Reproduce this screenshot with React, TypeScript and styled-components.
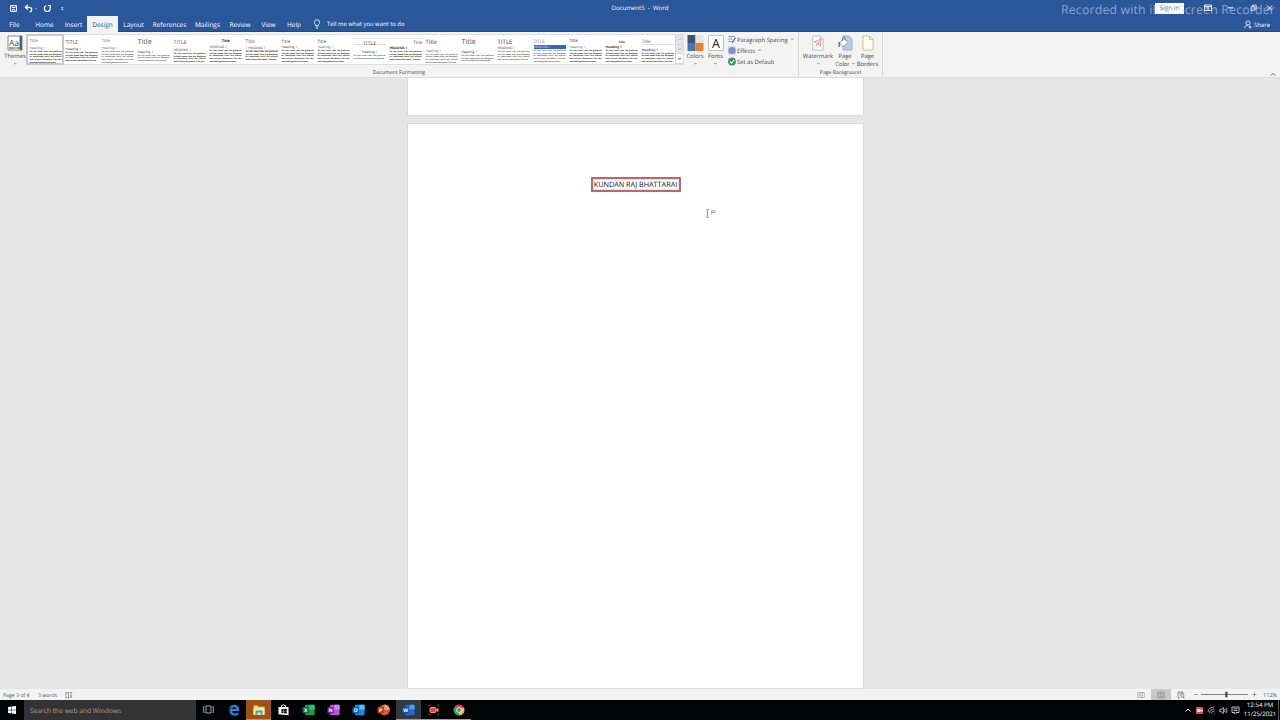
import React from "react";
import styled, { createGlobalStyle } from "styled-components";

const Global = createGlobalStyle`
  * { box-sizing: border-box; }
  body { margin: 0; overflow: hidden; font-family: "Open Sans", "Noto Sans", sans-serif; text-rendering: geometricPrecision; }
  svg { display: block; flex: none; }
`;

const Window = styled.div`
  width: 1280px; height: 720px; display: flex; flex-direction: column;
  position: relative; overflow: hidden; background: #e6e6e6; color: #444;
`;

const TitleBar = styled.header`
  height: 16px; flex: none; background: #2a579a; color: #fff; display: grid;
  grid-template-columns: 480px 320px 1fr; align-items: center;
`;
const QuickAccess = styled.div`display: flex; align-items: center; gap: 6px; padding-left: 9px;`;
const DocName = styled.div`text-align: center; font-size: 6.1px; line-height: 16px; white-space: pre;`;
const WindowButtons = styled.div`
  display: flex; justify-content: flex-end; align-items: center; padding-right: 6px; height: 16px;
`;
const SignIn = styled.div`
  width: 29px; height: 11px; background: #fff; color: #526f9f; font-size: 6.4px; line-height: 10px;
  text-align: center; margin-right: 12px;
`;
const WinIcon = styled.div`width: 23px; display: flex; justify-content: center; &:last-child { width: 9px; }`;
const Recording = styled.div`
  position: absolute; right: 5px; top: 1px; font: 12.3px/17px "Open Sans", sans-serif;
  color: rgba(205, 216, 235, .62); white-space: pre; letter-spacing: .18px;
`;

const TabBar = styled.nav`
  height: 16px; flex: none; background: #2a579a; color: #fff; display: flex; border-bottom: 1px solid #1d4a8b;
`;
const Tab = styled.div<{ $w: number; $active?: boolean }>`
  width: ${p => p.$w}px; text-align: center; font-size: 6.5px; line-height: 17px; height: 16px;
  background: ${p => (p.$active ? "#f3f3f3" : "transparent")}; color: ${p => (p.$active ? "#2a579a" : "#fff")};
`;
const TellMe = styled.div`display: flex; align-items: center; gap: 5px; padding: 1px 0 0 6px; flex: 1; font-size: 5.9px;`;
const Share = styled.div`display: flex; align-items: center; gap: 2px; padding: 2px 10px 0 0; font-size: 6px;`;

const Ribbon = styled.section`
  height: 46px; flex: none; background: #f3f3f3; border-bottom: 1px solid #dcdcdc; display: flex;
`;
const Group = styled.div<{ $w: number }>`
  width: ${p => p.$w}px; height: 45px; flex: none; display: flex; flex-direction: column;
  & + & { border-left: 1px solid #d8d8d8; }
`;
const GroupBody = styled.div`height: 38px; display: flex;`;
const GroupName = styled.div`font-size: 5.1px; line-height: 8px; text-align: center; color: #444;`;
const BigButton = styled.div<{ $w: number; $indent?: number }>`
  width: ${p => p.$w}px; flex: none; display: flex; flex-direction: column; align-items: center;
  padding: 3px 0 0 ${p => p.$indent ?? 0}px;
  font-size: 5.8px; line-height: 7.5px; white-space: nowrap; text-align: center;
  svg { margin-bottom: 2px; }
`;
const Caret = styled.i`
  display: block; width: 3px; height: 2px; margin-top: 2px; background: #999;
  clip-path: polygon(0 0, 50% 50%, 100% 0, 100% 50%, 50% 100%, 0 50%);
`;
const InlineCaret = styled(Caret)`display: inline-block; margin: 0 0 1px 2px;`;

const Gallery = styled.div`
  margin-top: 2px; width: 657px; flex: none; height: 31px; display: flex; background: #fff; border: 1px solid #dedede; border-left: 0;
`;
const StyleCell = styled.div<{ $selected?: boolean }>`
  width: 36px; height: 29px; flex: none; padding: 2.5px 1px 0 2.5px;
  outline: ${p => (p.$selected ? "2px solid #c8c8c8" : "0")}; outline-offset: -1px;
`;
const StyleTitle = styled.div<{ $size: number; $align: string; $color: string; $bold?: boolean; $rule?: boolean; $lines?: boolean }>`
  height: ${p => (p.$rule ? 7.5 : 8)}px; font-size: ${p => p.$size}px; line-height: 8px; text-align: ${p => p.$align};
  color: ${p => p.$color}; font-weight: ${p => (p.$bold ? 700 : 400)};
  border-bottom: ${p => (p.$rule ? "1px solid #ddd" : "0")};
  border-top: ${p => (p.$lines ? "1px solid #e2e2e2" : "0")};
`;
const StyleHeading = styled.div<{ $color: string; $align: string; $bar?: boolean; $gap: number; $bold?: boolean; $rule?: boolean }>`
  font-size: 3.3px; line-height: 4px; height: 4px; margin-top: ${p => p.$gap}px; text-align: ${p => p.$align};
  color: ${p => (p.$bar ? "#dce7f8" : p.$color)}; background: ${p => (p.$bar ? "#3465b8" : "transparent")};
  font-weight: ${p => (p.$bold ? 700 : 400)}; box-shadow: ${p => (p.$rule ? "0 1px #ccc" : "none")};
`;
const StyleText = styled.p<{ $dark: boolean }>`
  margin: 1px 0 0; font-size: 1.95px; line-height: 2.7px; font-weight: 700; white-space: nowrap;
  color: ${p => (p.$dark ? "#111" : "#555")};
  span { display: block; width: 32px; text-align: justify; text-align-last: justify; }
  span:last-child { text-align-last: left; }
`;
const GalleryScroll = styled.div`
  width: 8px; margin-left: auto; display: flex; flex-direction: column; background: #e4e4e4; border-left: 1px solid #d4d4d4;
`;
const ScrollStep = styled.div<{ $on?: boolean }>`
  flex: 1; display: flex; justify-content: center; align-items: center; border-bottom: 1px solid #d6d6d6;
  background: ${p => (p.$on ? "#fff" : "#e4e4e4")}; opacity: ${p => (p.$on ? 1 : 0.6)};
  ${Caret} { margin: 0; background: ${p => (p.$on ? "#555" : "#999")}; }
`;
const SmallList = styled.div`width: 73px; padding: 2px 0 0 3px; display: flex; flex-direction: column;`;
const SmallButton = styled.div`height: 11px; display: flex; align-items: center; gap: 1px; font-size: 5.8px; white-space: nowrap;`;
const RibbonEnd = styled.div`
  flex: 1; border-left: 1px solid #d8d8d8; display: flex; justify-content: flex-end; align-items: flex-end; padding: 0 4px 0 0;
`;

const Canvas = styled.main`
  height: 611px; flex: none; display: flex; flex-direction: column; align-items: center; padding-right: 9px; gap: 7px; overflow: hidden;
`;
const Page = styled.article<{ $h: number; $first?: boolean }>`
  width: 457px; height: ${p => p.$h}px; flex: none; background: #fff; border: 1px solid #dadada;
  border-top-width: ${p => (p.$first ? 0 : 1)}px; display: flex; flex-direction: column; align-items: center;
`;
const NameBox = styled.div`
  margin-top: 53px; width: 90px; height: 15px; border: 2px solid #b9696b; outline: 1px solid #f3e0e0; outline-offset: -3px;
  color: #161616; font: 7.25px/12px "Open Sans", sans-serif; display: flex; justify-content: center; white-space: nowrap;
`;
const Pointer = styled.div`position: absolute; left: 705px; top: 208px;`;

const StatusBar = styled.footer`
  height: 11px; flex: none; background: #f3f3f3; display: flex; align-items: center; color: #555; font-size: 5.2px; padding-left: 3px;
`;
const StatusText = styled.span<{ $w: number }>`width: ${p => p.$w}px; white-space: nowrap; line-height: 12px;`;
const StatusRight = styled.div`margin-left: auto; display: flex; align-items: center; height: 11px; padding-right: 3px;`;
const Zoom = styled.span`width: 14px; text-align: right; font-size: 5.6px; line-height: 12px;`;
const ViewMode = styled.div<{ $on?: boolean }>`
  width: 20px; height: 11px; display: flex; align-items: center; justify-content: center; background: ${p => (p.$on ? "#c8c8c8" : "transparent")};
`;

const TaskBar = styled.div`height: 20px; flex: none; background: #020305; display: flex; color: #fff;`;
const Start = styled.div`width: 24px; display: flex; align-items: center; justify-content: center;`;
const Search = styled.div`width: 172px; background: #333; color: #a5a5a5; font-size: 6.65px; padding: 1px 0 0 6px; line-height: 20px;`;
const TaskItem = styled.div<{ $bg?: string; $line?: string }>`
  width: 25px; display: flex; align-items: center; justify-content: center; background: ${p => p.$bg ?? "transparent"};
  border-bottom: 1px solid ${p => p.$line ?? "transparent"};
`;
const Tray = styled.div`margin-left: auto; display: flex; align-items: center; gap: 3px;`;
const Clock = styled.div`
  width: 34px; height: 20px; padding-top: 1px; text-align: center; font-size: 6.1px; line-height: 8.5px; white-space: nowrap;
`;
const ShowDesktop = styled.div`width: 2px; height: 20px; margin-left: -2px; border-left: 1px solid #555;`;

type Look = {
  title: string; size: number; color?: string; align?: string; bold?: boolean; rule?: boolean; lines?: boolean;
  heading?: string; hColor?: string; hAlign?: string; hBold?: boolean; hRule?: boolean; bar?: boolean; gap?: number; dark?: boolean;
  rows?: number;
};
const looks: Look[] = [
  { title: "Title", size: 4.2, hColor: "#44689c", dark: true },
  { title: "TITLE", size: 5.2, gap: 1.5, dark: true, rows: 4 },
  { title: "Title", size: 4.2, color: "#5b7096", hColor: "#5b7096" },
  { title: "Title", size: 7.2, gap: 4, rows: 3 },
  { title: "TITLE", size: 5.4, heading: "HEADING 1", gap: 2.5, dark: true, rows: 4 },
  { title: "Title", size: 3.6, align: "center", bold: true, color: "#111", heading: "HEADING 1", gap: -0.5, dark: true },
  { title: "Title", size: 4.8, heading: "1  HEADING 1", hRule: true, gap: 0.5, dark: true, rows: 4 },
  { title: "Title", size: 4.4, dark: true, gap: -0.5 },
  { title: "Title", size: 4.4, color: "#44546a", hColor: "#44689c", gap: -0.5, dark: true },
  { title: "TITLE", size: 5.4, align: "center", rule: true, lines: true, hAlign: "center", gap: 5, rows: 2 },
  { title: "Title", size: 4.4, align: "right", lines: true, heading: "HEADING 1", hBold: true, gap: 0.5, dark: true, rows: 4 },
  { title: "Title", size: 5.9, color: "#44546a", hColor: "#44689c", gap: 3, rows: 4 },
  { title: "Title", size: 7.2, gap: 4.5, rows: 3 },
  { title: "TITLE", size: 6.1, color: "#333", heading: "HEADING 1", gap: 0.5, rows: 4 },
  { title: "TITLE", size: 4.6, color: "#4472c4", bar: true, gap: -0.5, heading: "HEADING 1" },
  { title: "Title", size: 4.2, color: "#222", hColor: "#44689c", gap: -0.5, dark: true },
  { title: "Title", size: 2.8, align: "center", bold: true, color: "#111", hBold: true, gap: -0.5, dark: true },
  { title: "Title", size: 4.6, rule: true, hColor: "#44689c", hBold: true, gap: 2.5, dark: true, rows: 4 },
];
const sample = [
  "On the Insert tab, the galleries",
  "include items that are designed",
  "to coordinate with the overall",
  "look of your document. You can",
  "use these galleries to insert",
];

const Line = ({ w = 10, h = 10, d, color = "#fff", sw = 1 }: { w?: number; h?: number; d: string; color?: string; sw?: number }) => (
  <svg width={w} height={h} viewBox={`0 0 ${w} ${h}`} fill="none" stroke={color} strokeWidth={sw}><path d={d} /></svg>
);

const OfficeTile = ({ letter, dark, mid, light, round }: { letter: string; dark: string; mid: string; light: string; round?: boolean }) => (
  <svg width="13" height="12" viewBox="0 0 13 12">
    {round ? (
      <><circle cx="7.4" cy="6" r="5.4" fill={mid} /><path d="M7.4 .6A5.4 5.4 0 0 1 12.8 6H7.4Z" fill={light} /></>
    ) : (
      <><rect x="3" y=".8" width="9.6" height="10.4" rx=".8" fill={mid} /><path d="M7.5 .8h4.3q.8 0 .8.8v4H7.5Z" fill={light} /></>
    )}
    <rect x=".5" y="3" width="6.3" height="6.3" rx=".6" fill={dark} />
    <text x="3.65" y="8" fontSize="5" fontWeight="700" textAnchor="middle" fill="#fff" fontFamily="Open Sans, sans-serif">{letter}</text>
  </svg>
);

export default function App() {
  return (
    <Window>
      <Global />
      <TitleBar>
        <QuickAccess>
          <svg width="9" height="9" viewBox="0 0 9 9" fill="none" stroke="#fff" strokeWidth=".9"><path d="M1.5 1.5h6v6h-6ZM3 1.5v2h3.2v-2M3.2 7.4V5.4h2.6v2" /></svg>
          <svg width="13" height="9" viewBox="0 0 13 9" fill="none" stroke="#fff" strokeWidth="1.2"><path d="M3.8 1 1.3 3.3 3.8 5.5M1.5 3.3h3.8c3.2 0 3.2 4.2.2 4.7" /><path d="M11 4.2l1 1 1-1" strokeWidth=".5" /></svg>
          <svg width="9" height="9" viewBox="0 0 9 9" fill="none" stroke="#fff" strokeWidth="1.2"><path d="M3 1.8A3 3 0 1 0 6.9 3M4.8 1.5h2.5V4" /></svg>
          <svg width="6" height="9" viewBox="0 0 6 9"><path d="M3 3.2h2.5v.6H3ZM3 4.8h2.5L4.2 6.2Z" fill="#fff" /></svg>
        </QuickAccess>
        <DocName>Document5  -  Word</DocName>
        <WindowButtons>
          <SignIn>Sign in</SignIn>
          <WinIcon><Line w={8} h={8} d="M.5 1h7v5.5h-7ZM.5 2.6h7M4 6V3.5M3 4.5l1-1 1 1" sw={0.9} /></WinIcon>
          <WinIcon><Line w={7} h={8} d="M1 3.8h5" /></WinIcon>
          <WinIcon><Line w={7} h={8} d="M1.2 2.7h3.6v3.6H1.2ZM2.5 2.5V1.2h3.7V5H5" sw={0.8} /></WinIcon>
          <WinIcon><Line w={7} h={8} d="M1 1.5l5 5M6 1.5l-5 5" /></WinIcon>
        </WindowButtons>
      </TitleBar>
      <TabBar>
        <Tab $w={29}>File</Tab>
        <Tab $w={31}>Home</Tab>
        <Tab $w={27}>Insert</Tab>
        <Tab $w={31} $active>Design</Tab>
        <Tab $w={31}>Layout</Tab>
        <Tab $w={41}>References</Tab>
        <Tab $w={35}>Mailings</Tab>
        <Tab $w={30}>Review</Tab>
        <Tab $w={27}>View</Tab>
        <Tab $w={24}>Help</Tab>
        <TellMe>
          <svg width="10" height="10" viewBox="0 0 10 10" fill="none" stroke="#fff" strokeWidth=".8"><path d="M3.8 6.7C3.8 5.4 2.4 5 2.4 3.3a2.6 2.6 0 0 1 5.2 0c0 1.7-1.4 2.1-1.4 3.4ZM3.8 8h2.4M4.2 9.3h1.6" /></svg>
          <span>Tell me what you want to do</span>
        </TellMe>
        <Share>
          <svg width="8" height="9" viewBox="0 0 8 9" fill="none" stroke="#fff" strokeWidth=".8"><circle cx="4" cy="3" r="2.1" /><path d="M.7 8.3c0-2 1.2-3 3-3M4.5 7h3M6 5.5v3" /></svg>
          <span>Share</span>
        </Share>
      </TabBar>

      <Ribbon>
        <Group $w={798}>
          <GroupBody>
            <BigButton $w={27} $indent={3}>
              <svg width="16" height="16" viewBox="0 0 16 16"><path d="M1 1h14v14H1Z" fill="#fff" stroke="#8a8a8a" /><path d="M12.5 1h2.5v14h-2.5Z" fill="#4b6083" /><text x="2" y="10.5" fontSize="8.5" fill="#384b68" fontFamily="Open Sans, sans-serif">Aa</text><path d="M2.5 12h2v2h-2Z" fill="#4c7ac4" /><path d="M4.5 12h2v2h-2Z" fill="#e78436" /><path d="M6.5 12h2v2h-2Z" fill="#a5a5a5" /><path d="M8.5 12h2v2h-2Z" fill="#edbd38" /><path d="M10.5 12h2v2h-2Z" fill="#5aa655" /></svg>
              Themes<Caret />
            </BigButton>
            <Gallery>
              {looks.map((l, i) => (
                <StyleCell key={i} $selected={i === 0}>
                  <StyleTitle $size={l.size} $align={l.align ?? "left"} $color={l.color ?? "#555"} $bold={l.bold} $rule={l.rule} $lines={l.lines}>{l.title}</StyleTitle>
                  <StyleHeading $color={l.hColor ?? "#333"} $align={l.hAlign ?? "left"} $bar={l.bar} $gap={l.gap ?? 0.5} $bold={l.hBold} $rule={l.hRule}>{l.heading ?? "Heading 1"}</StyleHeading>
                  <StyleText $dark={!!l.dark}>{sample.slice(0, l.rows ?? 5).map(row => <span key={row}>{row}</span>)}</StyleText>
                </StyleCell>
              ))}
              <GalleryScroll><ScrollStep><Caret /></ScrollStep><ScrollStep><Caret /></ScrollStep><ScrollStep $on><Caret /></ScrollStep></GalleryScroll>
            </Gallery>
            <BigButton $w={22}>
              <svg width="17" height="16" viewBox="0 0 17 16"><path d="M.5 0h8v8h-8Z" fill="#42546c" /><path d="M8.5 0h8v8h-8Z" fill="#e4e4e6" /><path d="M.5 8h8v8h-8Z" fill="#4472c4" /><path d="M8.5 8h8v8h-8Z" fill="#ed7d31" /></svg>
              Colors<Caret />
            </BigButton>
            <BigButton $w={19}>
              <svg width="16" height="16" viewBox="0 0 16 16"><path d="M.5.5h15v15H.5Z" fill="#fff" stroke="#c2c2c2" /><text x="8" y="12.5" fontSize="12.5" textAnchor="middle" fill="#222" fontFamily="Open Sans, sans-serif">A</text></svg>
              Fonts<Caret />
            </BigButton>
            <SmallList>
              <SmallButton><svg width="8" height="9" viewBox="0 0 8 9"><path d="M.5 1.5h6M.5 4h4M.5 6.5h3" stroke="#777" strokeWidth=".8" /><path d="M7.5 2.5 4 8" stroke="#4472c4" strokeWidth="1.3" /></svg>Paragraph Spacing<InlineCaret /></SmallButton>
              <SmallButton><svg width="8" height="9" viewBox="0 0 8 9"><path d="M0 .5h8v8H0Z" fill="#cbd5e9" /><circle cx="4" cy="4.5" r="3.6" fill="#7b93cb" /></svg>Effects<InlineCaret /></SmallButton>
              <SmallButton><svg width="8" height="9" viewBox="0 0 8 9"><circle cx="4" cy="4.5" r="3.9" fill="#3f8e6a" /><path d="M2 4.5l1.5 1.6L6.2 3" fill="none" stroke="#fff" strokeWidth="1.1" /></svg>Set as Default</SmallButton>
            </SmallList>
          </GroupBody>
          <GroupName>Document Formatting</GroupName>
        </Group>
        <Group $w={84}>
          <GroupBody>
            <BigButton $w={38}>
              <svg width="12" height="16" viewBox="0 0 12 16"><path d="M.8 1h7.4l3 3v11H.8Z" fill="#fff" stroke="#b6b6b6" strokeWidth=".8" /><path d="M8 1v3h3" fill="none" stroke="#b6b6b6" strokeWidth=".8" /><path d="M2 7l7-3-1 8M3.5 12 9 4M2.5 7l6 3.5" stroke="#e99886" fill="none" /></svg>
              Watermark<Caret />
            </BigButton>
            <BigButton $w={16}>
              <svg width="15" height="16" viewBox="0 0 15 16"><path d="M5 1h6l3 3v11H5Z" fill="#b7cdeb" stroke="#8baad4" strokeWidth=".8" /><path d="M1.5 8 6 3.5l4 4L5.5 12Z" fill="#fff" stroke="#777" strokeWidth=".8" /><path d="M4.5 6V3q1-2 2.5 0v2" fill="none" stroke="#777" strokeWidth=".8" /><path d="M1.2 7v5" stroke="#3d78bd" strokeWidth="1.4" /></svg>
              Page<span>Color<InlineCaret /></span>
            </BigButton>
            <BigButton $w={29}>
              <svg width="12" height="16" viewBox="0 0 12 16"><path d="M1 1h6.5L11 4.5V15H1Z" fill="#fffdf3" stroke="#d9bd78" /><path d="M7.5 1v3.5H11" fill="none" stroke="#aaa" strokeWidth=".7" /></svg>
              Page<span>Borders</span>
            </BigButton>
          </GroupBody>
          <GroupName>Page Background</GroupName>
        </Group>
        <RibbonEnd><Line w={6} h={5} d="M.8 3.6 3 1.4l2.2 2.2" color="#555" sw={0.9} /></RibbonEnd>
      </Ribbon>

      <Canvas>
        <Page $h={38} $first />
        <Page $h={566}><NameBox>KUNDAN RAJ BHATTARAI</NameBox></Page>
      </Canvas>
      <Pointer>
        <svg width="12" height="11" viewBox="0 0 12 11" fill="none" stroke="#888" strokeWidth=".8"><path d="M1 1.5q1.5 0 1.5 1v6q0 1-1.5 1M4 1.5q-1.5 0-1.5 1v6q0 1 1.5 1M6 3h5M6 4.5h4M6 6h1" /></svg>
      </Pointer>

      <StatusBar>
        <StatusText $w={35}>Page 3 of 4</StatusText>
        <StatusText $w={27}>3 words</StatusText>
        <Line w={8} h={8} d="M.8 1.5 3.5 2v5L.8 6.5ZM3.5 2l3-.5v2M3.5 7l1-.3M5 4l2 3M7 4 5 7" color="#777" sw={0.7} />
        <StatusRight>
          <ViewMode><Line w={8} h={8} d="M.8 1.5h6.4v5H.8ZM4 1.5v5M2 3h1M2 4.5h1M5 3h1M5 4.5h1" color="#888" sw={0.6} /></ViewMode>
          <ViewMode $on><Line w={8} h={8} d="M1 1h6v6H1ZM2.5 2.5h3M2.5 4h3M2.5 5.5h3" color="#777" sw={0.6} /></ViewMode>
          <ViewMode><Line w={8} h={8} d="M1 1h5v2M1 1v6h2M2.5 2.5h3M2.5 4h1M4 5a1.5 1.5 0 1 0 3 0a1.5 1.5 0 1 0-3 0M6 6l1.5 1.5" color="#666" sw={0.7} /></ViewMode>
          <svg width="72" height="11" viewBox="0 0 72 11"><path d="M3 5.5h4M61.5 5.5h4M63.5 3.5v4" stroke="#777" strokeWidth=".7" /><path d="M10 5.5h47" stroke="#777" strokeWidth=".9" /><path d="M34.3 2.7h2.2v5.6h-2.2Z" fill="#444" /></svg>
          <Zoom>112%</Zoom>
        </StatusRight>
      </StatusBar>

      <TaskBar>
        <Start><svg width="8" height="8" viewBox="0 0 8 8" fill="#fff"><path d="M0 1.1 3.6.6v3.1H0ZM4 .5 8 0v3.7H4ZM0 4.2h3.6v3.2L0 6.9ZM4 4.2h4V8l-4-.5Z" /></svg></Start>
        <Search>Search the web and Windows</Search>
        <TaskItem><Line w={11} h={9} d="M3 1h5v7H3ZM1.5 1.5H.7v6h.8M9.5 1.5h.8v6h-.8" color="#ccc" sw={0.8} /></TaskItem>
        <TaskItem><svg width="12" height="12" viewBox="0 0 12 12"><path d="M.8 5.4C1.4 2.2 3.7.7 6.2.7c3.2 0 5 2.3 5 5v1.4H4c.2 2.6 3.8 3 6.5 1.5v2.3C6.3 12.6 1.5 11.4 1.5 7c0-1.7 1-3 2.5-3.7C2.6 3.6 1.6 4.3.8 5.4ZM4.1 5.1h4.2C8.3 2.3 4.3 2.3 4.1 5.1Z" fill="#2084df" /></svg></TaskItem>
        <TaskItem $bg="#9c5315" $line="#f08522"><svg width="12" height="12" viewBox="0 0 12 12"><path d="M.5 1.5h4l1 1.2h6v8H.5Z" fill="#f8d978" /><path d="M.5 4.5h11v6.2H.5Z" fill="#ffe99e" /><path d="M2.5 6.5h7v4.2h-2V8.6h-3v2.1h-2Z" fill="#34a9cf" /></svg></TaskItem>
        <TaskItem><svg width="12" height="12" viewBox="0 0 12 12"><path d="M.5 3h10v8.3L.5 10.2Z" fill="#fff" /><path d="M3.5 3.5V1.7Q5.5 0 7.5 1.7v1.8" fill="none" stroke="#fff" /><path d="M3.3 5.2 5.6 5v1.9H3.3ZM6 5l2.8-.3v2.2H6ZM3.3 7.3h2.3v1.9L3.3 9ZM6 7.3h2.8v2.2L6 9.2Z" fill="#111" /></svg></TaskItem>
        <TaskItem><OfficeTile letter="X" dark="#126b3d" mid="#1e9458" light="#36bd77" /></TaskItem>
        <TaskItem><OfficeTile letter="N" dark="#78209f" mid="#b856da" light="#d184ea" /></TaskItem>
        <TaskItem><OfficeTile letter="O" dark="#0863b4" mid="#1989d8" light="#50c5f3" /></TaskItem>
        <TaskItem><OfficeTile letter="P" dark="#bd3b1c" mid="#d95b3b" light="#ff9878" round /></TaskItem>
        <TaskItem $bg="#303840" $line="#6aa9df"><OfficeTile letter="W" dark="#1751a8" mid="#2766c5" light="#45a2ec" /></TaskItem>
        <TaskItem $line="#6aa9df"><svg width="12" height="12" viewBox="0 0 12 12" fill="none"><path d="M1 3V1h2M9 1h2v2M1 9v2h2M9 11h2V9" stroke="#a33030" strokeWidth=".8" /><rect x="2" y="3.5" width="6" height="5" rx="1" fill="#d84848" stroke="#ffb0a8" strokeWidth=".8" /><path d="M8 5.5l2.5-1.5v4L8 6.5Z" fill="#ff8d83" /></svg></TaskItem>
        <TaskItem $line="#6aa9df"><svg width="12" height="12" viewBox="0 0 12 12"><path d="M6 6 1.24 3.25A5.5 5.5 0 0 1 10.76 3.25Z" fill="#e64235" /><path d="M6 6l4.76-2.75A5.5 5.5 0 0 1 6 11.5Z" fill="#fbc116" /><path d="M6 6v5.5A5.5 5.5 0 0 1 1.24 3.25Z" fill="#33a753" /><circle cx="6" cy="6" r="2.7" fill="#fff" /><circle cx="6" cy="6" r="2.1" fill="#4384f3" /></svg></TaskItem>
        <Tray>
          <Line w={8} h={8} d="M1.5 5.5 4 3l2.5 2.5" />
          <svg width="9" height="9" viewBox="0 0 9 9"><path d="M1 1h7v7H1Z" fill="#d84b52" /><rect x="2" y="3" width="3.6" height="3" fill="#ffe4e4" /><path d="M5.6 4.5 7.5 3v3Z" fill="#fff" /></svg>
          <svg width="9" height="9" viewBox="0 0 9 9" fill="none" stroke="#bbb" strokeWidth=".8"><path d="M1 6A6 6 0 0 1 7 1M2.5 7A5 5 0 0 1 7.5 3M4.3 7.5A3 3 0 0 1 7.5 5M6.5 7.5h1" /></svg>
          <svg width="9" height="9" viewBox="0 0 9 9" fill="none" stroke="#ddd" strokeWidth=".8"><path d="M.8 3.3h1.5L4.3 1.5v6L2.3 5.8H.8ZM5.5 3q1.2 1.5 0 3M7 1.8q2 2.7 0 5.4" /></svg>
          <svg width="9" height="9" viewBox="0 0 9 9" fill="none" stroke="#eee" strokeWidth=".8"><path d="M1 1h7v5.5H5L3.5 8V6.5H1ZM2.5 2.8h4M2.5 4.6h4" /></svg>
          <Clock>12:54 PM<br />11/25/2021</Clock>
          <ShowDesktop />
        </Tray>
      </TaskBar>
      <Recording>Recorded with iFun Screen Recorder</Recording>
    </Window>
  );
}
